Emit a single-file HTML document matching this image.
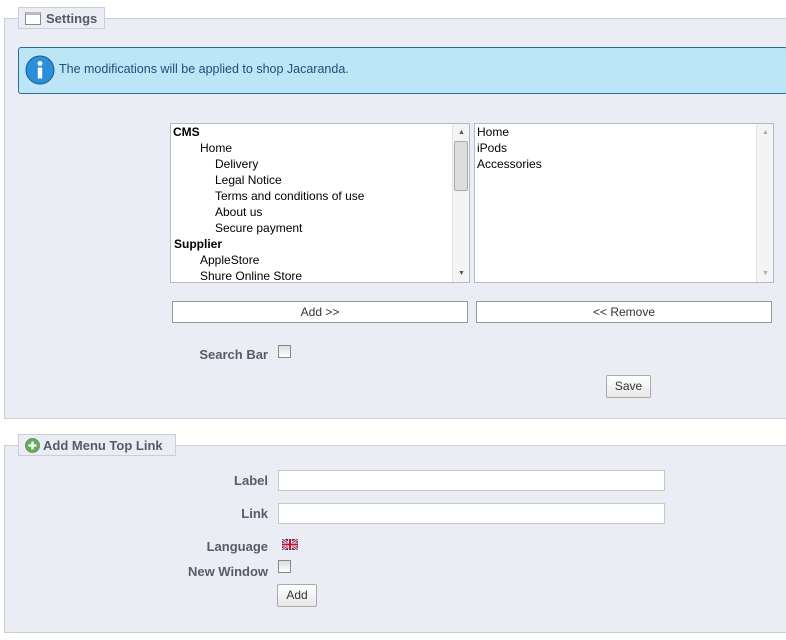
<!DOCTYPE html>
<html><head><style>
*{box-sizing:border-box}
body{margin:0;width:786px;height:640px;background:#fff;font-family:"Liberation Sans",sans-serif;font-size:12px;color:#000;position:relative;overflow:hidden}
.fs{position:absolute;background:#ebedf4;border:1px solid #ccced7;border-right:none}
.lg{position:absolute;background:#ebedf4;border:1px solid #ccced7;font-weight:bold;font-size:13px;color:#585a69;height:22px;line-height:22px;padding-left:6px}
.a{position:absolute}
.sel{position:absolute;background:#fff;border:1px solid #b5b8c8}
.sb{position:absolute;right:0;top:0;width:17px;height:100%;background:#f4f4f4;border-left:1px solid #e4e4e4}
.btn{position:absolute;background:linear-gradient(#fff,#e8e8e8);border:1px solid #aaa;border-radius:2px;text-align:center;font-size:12px;color:#333}
.lbl{position:absolute;right:518px;font-weight:bold;font-size:13px;color:#585a69;text-align:right;white-space:nowrap}
.cb{position:absolute;width:13px;height:13px;border:1px solid #888;background:linear-gradient(#ddd,#fff)}
.inp{position:absolute;left:278px;width:387px;height:21px;background:#fff;border:1px solid #c8c8c8}
.it{position:absolute;white-space:nowrap;line-height:16px}
</style></head><body>
<div class="fs" style="left:4px;top:18px;width:782px;height:401px"></div>
<div class="lg" style="left:18px;top:7px;width:87px"><span style="display:inline-block;width:16px;height:13px;border:1px solid #888;background:#fff;vertical-align:-2px;margin-right:5px;border-top:3px solid #bbb"></span>Settings</div>
<div class="a" style="left:18px;top:47px;width:770px;height:47px;background:#bde5f8;border:1px solid #2a6a9c;border-radius:3px"></div>
<svg class="a" style="left:25px;top:55px" width="30" height="30"><circle cx="15" cy="15" r="14" fill="#2a8fd6" stroke="#1b5f96"/><circle cx="15" cy="8.5" r="2.5" fill="#fff"/><rect x="12.8" y="12.5" width="4.4" height="11" fill="#fff"/></svg>
<div class="a" style="left:59px;top:62px;color:#1c4f78;font-size:12.5px">The modifications will be applied to shop Jacaranda.</div>

<div class="sel" style="left:170px;top:123px;width:300px;height:160px;overflow:hidden">
<div class="sb"><div style="position:absolute;left:1px;top:17px;width:14px;height:50px;background:#ddd;border:1px solid #aaa;border-radius:2px"></div><div style="position:absolute;left:5px;top:5px;font-size:7px;color:#555">▲</div><div style="position:absolute;left:5px;bottom:5px;font-size:7px;color:#555">▼</div></div>
<div class="it" style="left:2px;top:0;font-weight:bold">CMS</div>
<div class="it" style="left:29px;top:16px">Home</div>
<div class="it" style="left:44px;top:32px">Delivery</div>
<div class="it" style="left:44px;top:48px">Legal Notice</div>
<div class="it" style="left:44px;top:64px">Terms and conditions of use</div>
<div class="it" style="left:44px;top:80px">About us</div>
<div class="it" style="left:44px;top:96px">Secure payment</div>
<div class="it" style="left:3px;top:112px;font-weight:bold">Supplier</div>
<div class="it" style="left:29px;top:128px">AppleStore</div>
<div class="it" style="left:29px;top:144px">Shure Online Store</div>
</div>
<div class="sel" style="left:474px;top:123px;width:300px;height:160px;overflow:hidden">
<div class="sb"><div style="position:absolute;left:5px;top:5px;font-size:7px;color:#aaa">▲</div><div style="position:absolute;left:5px;bottom:5px;font-size:7px;color:#aaa">▼</div></div>
<div class="it" style="left:2px;top:0">Home</div>
<div class="it" style="left:2px;top:16px">iPods</div>
<div class="it" style="left:2px;top:32px">Accessories</div>
</div>
<div class="btn" style="left:172px;top:301px;width:296px;height:22px;line-height:20px;background:#fff;border-color:#999;border-radius:0">Add &gt;&gt;</div>
<div class="btn" style="left:476px;top:301px;width:296px;height:22px;line-height:20px;background:#fff;border-color:#999;border-radius:0">&lt;&lt; Remove</div>
<div class="lbl" style="top:347px">Search Bar</div>
<div class="cb" style="left:278px;top:345px"></div>
<div class="btn" style="left:606px;top:375px;width:45px;height:23px;line-height:21px">Save</div>

<div class="fs" style="left:4px;top:445px;width:782px;height:188px"></div>
<div class="lg" style="left:18px;top:434px;width:158px"><svg width="15" height="15" style="vertical-align:-3px;margin-right:3px"><circle cx="7.5" cy="7.5" r="7" fill="#5cb04e" stroke="#7a8a78"/><rect x="6.3" y="3.5" width="2.4" height="8" fill="#fff"/><rect x="3.5" y="6.3" width="8" height="2.4" fill="#fff"/></svg>Add Menu Top Link</div>
<div class="lbl" style="top:473px">Label</div>
<div class="inp" style="top:470px"></div>
<div class="lbl" style="top:506px">Link</div>
<div class="inp" style="top:503px"></div>
<div class="lbl" style="top:539px">Language</div>
<svg class="a" style="left:282px;top:539px" width="16" height="11"><rect width="16" height="11" fill="#24408e"/><path d="M0 0L16 11M16 0L0 11" stroke="#fff" stroke-width="2.5"/><path d="M0 0L16 11M16 0L0 11" stroke="#c8102e" stroke-width="1"/><path d="M8 0V11M0 5.5H16" stroke="#fff" stroke-width="3.5"/><path d="M8 0V11M0 5.5H16" stroke="#c8102e" stroke-width="2"/></svg>
<div class="lbl" style="top:564px">New Window</div>
<div class="cb" style="left:278px;top:560px"></div>
<div class="btn" style="left:277px;top:584px;width:40px;height:23px;line-height:21px">Add</div>
</body></html>
